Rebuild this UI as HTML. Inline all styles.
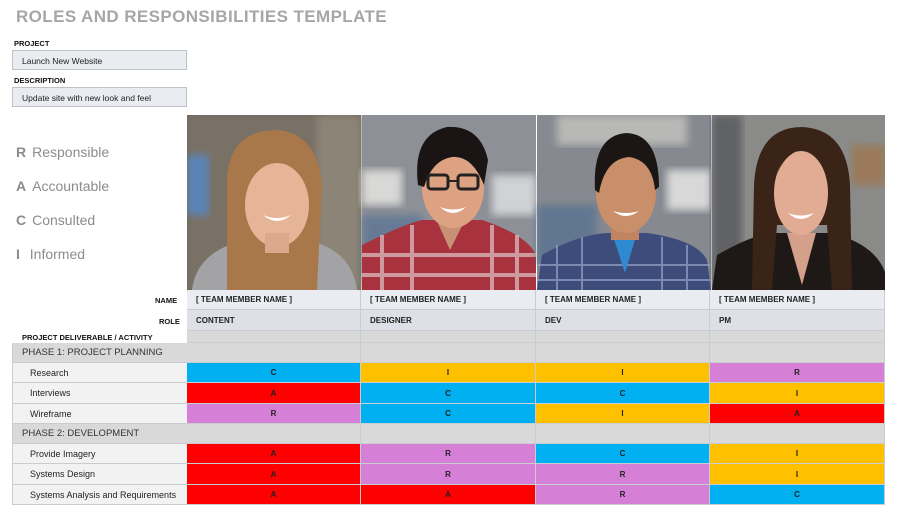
<!DOCTYPE html>
<html><head><meta charset="utf-8"><style>
*{margin:0;padding:0;box-sizing:border-box}
body{width:900px;height:525px;background:#fff;font-family:"Liberation Sans",sans-serif;position:relative;overflow:hidden;color:#222}
.a{position:absolute}
h1{position:absolute;left:16px;top:7px;font-size:17px;font-weight:bold;color:#a6a6a6;letter-spacing:0.4px}
.lbl{font-size:7.5px;font-weight:bold;color:#111}
.box{position:absolute;left:12px;width:175px;height:20px;background:#e9ecf1;border:1px solid #bfc3c9;font-size:8.5px;padding:5px 0 0 9px}
.leg{position:absolute;left:16px;font-size:14px;color:#8c8c8c}
.leg b{color:#8c8c8c;margin-right:6px}
.c{position:absolute;font-size:8px;font-weight:bold;text-align:center;border-right:1px solid #c9ccd0;border-bottom:1px solid #c9ccd0}
.r{position:absolute;left:12px;width:175px;font-size:9px;border-bottom:1px solid #c9ccd0;border-left:1px solid #c9ccd0}
</style></head><body>
<h1>ROLES AND RESPONSIBILITIES TEMPLATE</h1>
<div class="a lbl" style="left:14px;top:39px">PROJECT</div>
<div class="box" style="top:50px">Launch New Website</div>
<div class="a lbl" style="left:14px;top:76px">DESCRIPTION</div>
<div class="box" style="top:87px">Update site with new look and feel</div>
<div class="leg" style="top:144px"><b>R</b>Responsible</div>
<div class="leg" style="top:178px"><b>A</b>Accountable</div>
<div class="leg" style="top:212px"><b>C</b>Consulted</div>
<div class="leg" style="top:246px"><b>I</b>&nbsp;Informed</div>

<svg class="a" style="left:187px;top:115px" width="698" height="175" viewBox="0 0 698 175">
<defs><filter id="bl"><feGaussianBlur stdDeviation="4"/></filter></defs>
<g>
<rect x="0" y="0" width="174" height="175" fill="#6e6860"/>
<rect x="0" y="0" width="174" height="175" fill="#857a6c" opacity=".5" filter="url(#bl)"/>
<rect x="0" y="40" width="22" height="60" fill="#5a84b8" filter="url(#bl)"/>
<rect x="130" y="0" width="44" height="175" fill="#8c8476" filter="url(#bl)"/>
<path d="M5 175 Q10 135 60 125 L120 125 Q165 135 170 175Z" fill="#a3a3a6"/>
<path d="M40 175 L40 60 Q45 15 90 15 Q130 18 135 70 L130 175 Z" fill="#a8784a"/>
<ellipse cx="90" cy="90" rx="32" ry="42" fill="#e6b497"/>
<rect x="78" y="118" width="24" height="20" fill="#dca88c"/>
<path d="M76 100 Q90 112 104 100 Q90 106 76 100Z" fill="#fff"/>
</g>
<g transform="translate(175,0)">
<rect width="174" height="175" fill="#8d9097"/>
<rect x="0" y="55" width="40" height="35" fill="#d8d8d6" filter="url(#bl)"/>
<rect x="0" y="100" width="60" height="60" fill="#4e6d94" opacity=".6" filter="url(#bl)"/>
<rect x="130" y="60" width="44" height="40" fill="#d0d2d4" filter="url(#bl)"/>
<path d="M0 175 L0 130 Q40 110 60 105 L120 105 Q165 120 174 140 L174 175Z" fill="#a8323e"/>
<g stroke="#e8e0e0" stroke-width="4" opacity=".6"><path d="M20 120 V175 M50 110 V175 M130 110 V175 M155 120 V175 M0 140 H174 M0 160 H174"/></g>
<path d="M70 95 L88 135 L108 95Z" fill="#c89074"/>
<ellipse cx="91" cy="73" rx="31" ry="40" fill="#dca282"/>
<path d="M56 70 Q50 20 85 12 Q118 10 126 45 L122 70 Q110 40 90 42 Q70 45 62 72Z" fill="#1a1414"/>
<rect x="66" y="60" width="20" height="14" rx="3" fill="none" stroke="#222" stroke-width="3"/>
<rect x="96" y="60" width="20" height="14" rx="3" fill="none" stroke="#222" stroke-width="3"/>
<path d="M86 66 H96" stroke="#222" stroke-width="2"/>
<path d="M78 92 Q91 104 104 92 Q91 97 78 92Z" fill="#fff"/>
</g>
<g transform="translate(350,0)">
<rect width="174" height="175" fill="#868a90"/>
<rect x="20" y="0" width="130" height="30" fill="#b8b8b6" filter="url(#bl)"/>
<rect x="130" y="55" width="44" height="40" fill="#d8d8d8" filter="url(#bl)"/>
<rect x="0" y="90" width="60" height="60" fill="#4a6a90" opacity=".6" filter="url(#bl)"/>
<path d="M0 175 L5 140 Q40 120 70 118 L110 118 Q160 125 170 145 L174 175Z" fill="#3e4c7c"/>
<g stroke="#9aa4c8" stroke-width="2" opacity=".7"><path d="M20 130 V175 M45 122 V175 M125 122 V175 M150 130 V175 M0 150 H174 M0 165 H174"/></g>
<path d="M75 118 L88 158 L100 118Z" fill="#2f8ad0"/>
<rect x="74" y="100" width="28" height="25" fill="#c08462"/>
<ellipse cx="89" cy="78" rx="30" ry="40" fill="#c98e6a"/>
<path d="M58 75 Q55 20 90 18 Q122 20 122 72 L118 75 Q115 45 92 42 Q68 44 62 78Z" fill="#1b1614"/>
<path d="M76 96 Q89 106 102 96 Q89 100 76 96Z" fill="#fff"/>
</g>
<g transform="translate(525,0)">
<rect width="174" height="175" fill="#8a8a88"/>
<rect x="0" y="0" width="30" height="175" fill="#606266" filter="url(#bl)"/>
<rect x="140" y="30" width="34" height="40" fill="#9a7a5a" filter="url(#bl)"/>
<path d="M0 175 L5 140 Q40 120 60 118 L120 118 Q165 130 174 160 L174 175Z" fill="#1e1816"/>
<path d="M40 175 L42 70 Q45 12 90 12 Q135 14 138 70 L140 175 L120 175 L115 110 L65 110 L60 175Z" fill="#3a2418"/>
<path d="M75 118 L90 170 L104 118Z" fill="#d4a08a"/>
<ellipse cx="89" cy="78" rx="27" ry="42" fill="#e2ac94"/>
<path d="M65 60 Q75 28 100 30 Q110 40 115 60 Q105 35 88 35 Q72 40 65 60Z" fill="#3a2418"/>
<path d="M76 98 Q89 110 102 98 Q89 103 76 98Z" fill="#fff"/>
</g>
</svg>

<div class="a lbl" style="left:155px;top:296px">NAME</div>
<div class="a lbl" style="left:159px;top:317px">ROLE</div>
<div class="a lbl" style="left:22px;top:333px">PROJECT DELIVERABLE / ACTIVITY</div>

<div id="g"></div>
<script>
const X=[187,361,536,710,885];
const Y=[290,310,331,343,363,383,404,424,444,464,485,505];
const col={C:'#00b0f0',I:'#ffc000',A:'#ff0000',R:'#d580d6'};
const data=[
['name',['[ TEAM MEMBER NAME ]','[ TEAM MEMBER NAME ]','[ TEAM MEMBER NAME ]','[ TEAM MEMBER NAME ]']],
['role',['CONTENT','DESIGNER','DEV','PM']],
['gray',null],
['phase','PHASE 1: PROJECT PLANNING'],
['Research','CIIR'],['Interviews','ACCI'],['Wireframe','RCIA'],
['phase','PHASE 2: DEVELOPMENT'],
['Provide Imagery','ARCI'],['Systems Design','ARRI'],['Systems Analysis and Requirements','AARC']];
let h='';
data.forEach((d,i)=>{const y=Y[i],hh=Y[i+1]-y;
 if(d[0]=='phase'){h+=`<div class="r" style="top:${y}px;height:${hh}px;background:#d9d9d9;padding:4px 0 0 9px;font-size:9.5px;color:#333">${d[1]}</div>`;}
 else if(i>=4){h+=`<div class="r" style="top:${y}px;height:${hh}px;background:#f2f2f2;padding:5px 0 0 17px">${d[0]}</div>`;}
 for(let j=0;j<4;j++){let bg,t='',al='center',pad='0';
  if(d[0]=='name'){bg='#e9ecf1';t=d[1][j];al='left';pad='0 0 0 9px'}
  else if(d[0]=='role'){bg='#dde1e7';t=d[1][j];al='left';pad='0 0 0 9px'}
  else if(d[0]=='gray'||d[0]=='phase'){bg='#d9d9d9'}
  else {t=d[1][j];bg=col[t]}
  h+=`<div class="c" style="left:${X[j]}px;top:${y}px;width:${X[j+1]-X[j]}px;height:${hh}px;line-height:${hh}px;background:${bg};text-align:${al};padding:${pad}">${t}</div>`;}
});
document.getElementById('g').innerHTML=h;
</script>
</body></html>
